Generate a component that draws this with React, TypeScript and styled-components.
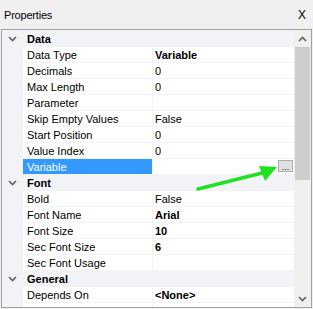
import React from "react";
import styled, { createGlobalStyle } from "styled-components";

const Global = createGlobalStyle`
  html, body { margin: 0; padding: 0; background: #f0f0f0; }
  body { font-family: "Liberation Sans", Arial, sans-serif; font-size: 11px; color: #000; }
`;

const LINE = "#f1f3f7";

const Window = styled.div`
  position: relative;
  width: 313px;
  height: 309px;
  background: #f0f0f0;
  overflow: hidden;
`;

const TitleBar = styled.div`
  height: 29px;
  display: flex;
  align-items: center;
  justify-content: space-between;
  padding: 0 7px 0 4px;
  box-sizing: border-box;
  font-size: 11px;
`;

const Title = styled.span`
  padding-top: 1px;
  letter-spacing: -0.2px;
`;

const Close = styled.span`
  font-size: 12px;
  padding-top: 1px;
`;

const Panel = styled.div`
  margin-left: 1px;
  width: 311px;
  height: 279px;
  box-sizing: border-box;
  border: 1px solid #a0a0a0;
  display: flex;
  background: #fff;
`;

const Grid = styled.div`
  flex: 1;
  overflow: hidden;
  background: ${LINE};
`;

const Row = styled.div`
  display: grid;
  grid-template-columns: 21px 130px 1fr;
  height: 16px;
  box-sizing: border-box;
  border-top: 1px solid ${LINE};
`;

const Gutter = styled.div`
  display: flex;
  align-items: center;
  justify-content: center;
  padding-top: 1px;
`;

const Category = styled.div`
  grid-column: 2 / 4;
  padding: 1px 0 0 4px;
  font-weight: bold;
  line-height: 14px;
`;

const Name = styled.div<{ $selected?: boolean }>`
  padding: 1px 0 0 4px;
  line-height: 14px;
  white-space: nowrap;
  overflow: hidden;
  background: ${(p) => (p.$selected ? "#3399ff" : "#fff")};
  color: ${(p) => (p.$selected ? "#fff" : "#000")};
  border-right: 1px solid ${LINE};
`;

const Value = styled.div<{ $bold?: boolean }>`
  position: relative;
  padding: 1px 0 0 2px;
  line-height: 14px;
  white-space: nowrap;
  background: #fff;
  font-weight: ${(p) => (p.$bold ? "bold" : "normal")};
`;

const Ellipsis = styled.button`
  position: absolute;
  right: 1px;
  top: 1px;
  width: 15px;
  height: 12px;
  padding: 0;
  margin: 0;
  border: 1px solid #adadad;
  background: #e1e1e1;
  font-family: "Liberation Sans", Arial, sans-serif;
  font-size: 9px;
  line-height: 8px;
  color: #000;
  display: flex;
  align-items: flex-end;
  justify-content: center;
  box-sizing: border-box;
`;

const Scrollbar = styled.div`
  width: 17px;
  display: flex;
  flex-direction: column;
  background: #f0f0f0;
`;

const ArrowButton = styled.div`
  height: 17px;
  display: flex;
  align-items: center;
  justify-content: center;
`;

const Track = styled.div`
  flex: 1;
  display: flex;
  flex-direction: column;
  padding: 0 1px;
`;

const Thumb = styled.div`
  height: 133px;
  background: #cdcdcd;
`;

const Overlay = styled.svg`
  position: absolute;
  left: 0;
  top: 0;
  pointer-events: none;
`;

const Chevron = ({ up }: { up?: boolean }) => (
  <svg width="9" height="6" viewBox="0 0 9 6">
    <path
      d={up ? "M1 5 L4.5 1.5 L8 5" : "M1 1 L4.5 4.5 L8 1"}
      fill="none"
      stroke="#606060"
      strokeWidth="1.6"
    />
  </svg>
);

type Item =
  | { kind: "cat"; label: string }
  | { kind: "prop"; label: string; value?: string; bold?: boolean; selected?: boolean };

const items: Item[] = [
  { kind: "cat", label: "Data" },
  { kind: "prop", label: "Data Type", value: "Variable", bold: true },
  { kind: "prop", label: "Decimals", value: "0" },
  { kind: "prop", label: "Max Length", value: "0" },
  { kind: "prop", label: "Parameter", value: "" },
  { kind: "prop", label: "Skip Empty Values", value: "False" },
  { kind: "prop", label: "Start Position", value: "0" },
  { kind: "prop", label: "Value Index", value: "0" },
  { kind: "prop", label: "Variable", value: "", selected: true },
  { kind: "cat", label: "Font" },
  { kind: "prop", label: "Bold", value: "False" },
  { kind: "prop", label: "Font Name", value: "Arial", bold: true },
  { kind: "prop", label: "Font Size", value: "10", bold: true },
  { kind: "prop", label: "Sec Font Size", value: "6", bold: true },
  { kind: "prop", label: "Sec Font Usage", value: "" },
  { kind: "cat", label: "General" },
  { kind: "prop", label: "Depends On", value: "<None>", bold: true },
  { kind: "prop", label: "Name", value: "" },
];

export default function App() {
  return (
    <Window>
      <Global />
      <TitleBar>
        <Title>Properties</Title>
        <Close>X</Close>
      </TitleBar>
      <Panel>
        <Grid>
          {items.map((it, i) =>
            it.kind === "cat" ? (
              <Row key={i}>
                <Gutter>
                  <Chevron />
                </Gutter>
                <Category>{it.label}</Category>
              </Row>
            ) : (
              <Row key={i}>
                <Gutter />
                <Name $selected={it.selected}>{it.label}</Name>
                <Value $bold={it.bold}>
                  {it.value}
                  {it.selected && <Ellipsis>...</Ellipsis>}
                </Value>
              </Row>
            )
          )}
        </Grid>
        <Scrollbar>
          <ArrowButton>
            <Chevron up />
          </ArrowButton>
          <Track>
            <Thumb />
          </Track>
          <ArrowButton>
            <Chevron />
          </ArrowButton>
        </Scrollbar>
      </Panel>
      <Overlay width="313" height="309">
        <line x1="198" y1="189" x2="266" y2="172" stroke="#22e022" strokeWidth="3.5" strokeLinecap="round" />
        <polygon points="277,167 259,166 265,181" fill="#22e022" />
      </Overlay>
    </Window>
  );
}
